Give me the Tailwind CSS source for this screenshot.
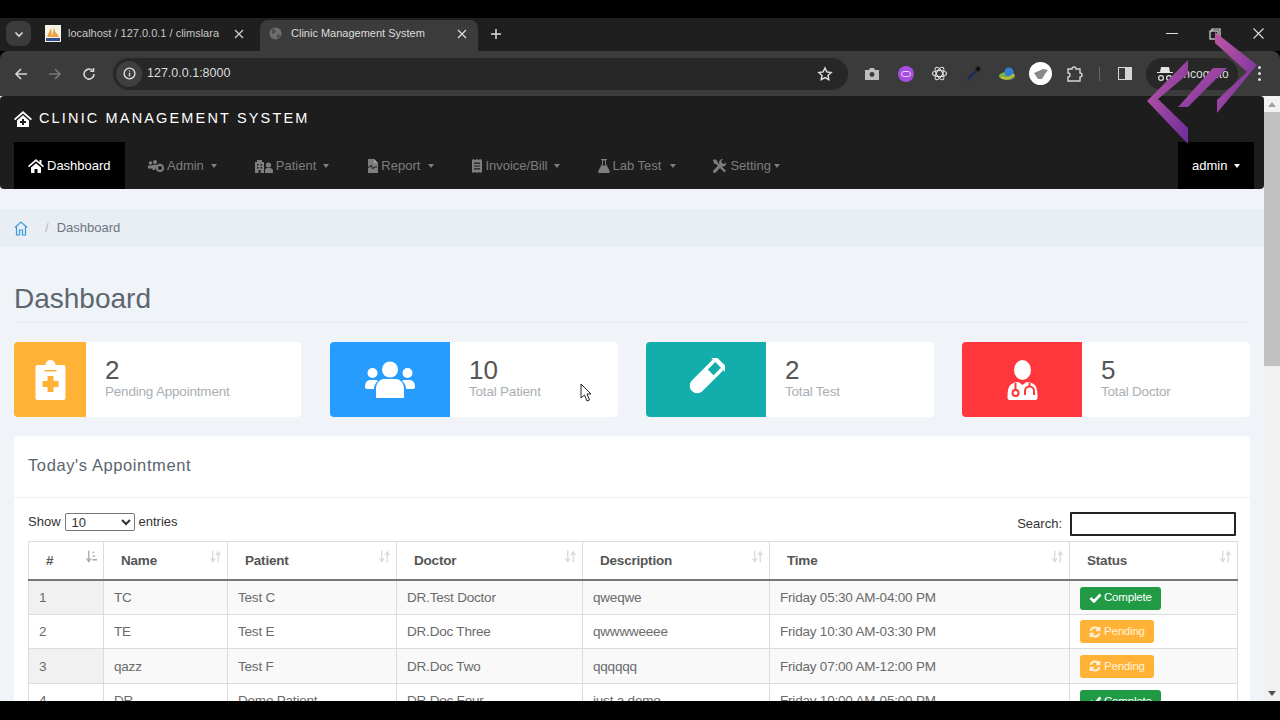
<!DOCTYPE html>
<html lang="en">
<head>
  <meta charset="UTF-8">
  <title>Clinic Management System</title>
  <script src="https://cdn.jsdelivr.net/npm/@tailwindcss/browser@4"></script>
</head>
<body class="bg-black font-['Liberation_Sans',Arial,sans-serif]">
<div class="relative w-[1280px] h-[720px] overflow-hidden bg-black flex flex-col">

  <!-- browser tabs -->
  <div class="mt-[18px] h-[33px] pb-[2px] shrink-0 bg-[#1f1f1f] flex items-center text-[#c7c7c7] text-[11px]">
    <div class="ml-[6px] w-[25px] h-[25px] rounded-lg bg-[#3b3b3b] flex items-center justify-center">
      <svg width="10" height="10" viewBox="0 0 10 10" fill="none" stroke="#ddd" stroke-width="1.6"><path d="M1.5 3.5 5 7l3.5-3.5"/></svg>
    </div>
    <div class="w-[229px] h-full flex items-center pl-[14px]">
      <svg width="16" height="17" viewBox="0 0 16 17" class="mr-[7px] shrink-0"><rect width="16" height="17" fill="#f4f1e6"/><path d="M2 12 6 3l1 9zM7 12l2-10 2 10zM11 12 10 6l4 6z" fill="#e8a33a"/><rect x="1" y="13" width="14" height="3" fill="#2f4f8f"/></svg>
      <span class="w-[153px] overflow-hidden whitespace-nowrap">localhost / 127.0.0.1 / climslara</span>
      <svg width="10" height="10" viewBox="0 0 10 10" stroke="#ccc" stroke-width="1.3" class="ml-[13px]"><path d="M1 1l8 8M9 1 1 9"/></svg>
    </div>
    <div class="w-[218px] h-[31px] self-end -mb-[2px] pb-[4px] bg-[#3b3b3b] rounded-t-lg flex items-center pl-[9px]">
      <svg width="13" height="13" viewBox="0 0 13 13" class="mr-[9px] shrink-0"><circle cx="6.500" cy="6.500" r="6" fill="#6e6e6e"/><path d="M3 2l4 1-1 3-3 1zM8 8l3-1-1 4-2 0z" fill="#4a4a4a"/></svg>
      <span class="w-[166px] whitespace-nowrap text-[#dedede]">Clinic Management System</span>
      <svg width="10" height="10" viewBox="0 0 10 10" stroke="#ddd" stroke-width="1.3"><path d="M1 1l8 8M9 1 1 9"/></svg>
    </div>
    <svg width="12" height="12" viewBox="0 0 12 12" stroke="#ddd" stroke-width="1.5" class="ml-[12px]"><path d="M6 1v10M1 6h10"/></svg>
    <div class="ml-auto flex items-center">
      <div class="w-[12px] h-px bg-[#ddd] mr-[31px]"></div>
      <svg width="12" height="12" viewBox="0 0 12 12" fill="none" stroke="#ddd" stroke-width="1.2" class="mr-[32px]"><rect x="1" y="3" width="8" height="8"/><path d="M3 3V1h8v8H9"/></svg>
      <svg width="11" height="11" viewBox="0 0 11 11" stroke="#ddd" stroke-width="1.1" class="mr-[16px]"><path d="M.5.5l10 10M10.500.5l-10 10"/></svg>
    </div>
  </div>

  <!-- browser toolbar -->
  <div class="h-[45px] shrink-0 bg-[#3b3b3b] rounded-t-lg flex items-center">
    <svg width="14" height="14" viewBox="0 0 14 14" fill="none" stroke="#d6d6d6" stroke-width="1.600" class="ml-[14px]"><path d="M13 7H2M7 2 2 7l5 5"/></svg>
    <svg width="14" height="14" viewBox="0 0 14 14" fill="none" stroke="#777" stroke-width="1.600" class="ml-[20px]"><path d="M1 7h11M7 2l5 5-5 5"/></svg>
    <svg width="14" height="14" viewBox="0 0 14 14" fill="none" stroke="#d6d6d6" stroke-width="1.600" class="ml-[20px]"><path d="M12 7a5 5 0 1 1-1.500-3.500"/><path d="M11.500 1v3.300H8.200" /></svg>
    <div class="ml-[17px] w-[735px] h-[32px] rounded-full bg-[#272727] flex items-center">
      <div class="ml-[3px] w-[26px] h-[26px] rounded-full bg-[#3f3f3f] flex items-center justify-center">
        <svg width="13" height="13" viewBox="0 0 13 13" fill="none" stroke="#e4e4e4" stroke-width="1.300"><circle cx="6.500" cy="6.500" r="5.400"/><path d="M6.500 5.800v3.600M6.500 3.400v1.200"/></svg>
      </div>
      <span class="ml-[5px] text-[12.500px] text-[#dcdcdc]">127.0.0.1:8000</span>
      <svg width="16" height="16" viewBox="0 0 24 24" fill="none" stroke="#dcdcdc" stroke-width="2.200" class="ml-auto mr-[15px]"><path d="m12 3 2.800 5.900 6.400.8-4.700 4.400 1.200 6.400-5.700-3.100-5.700 3.100 1.200-6.400-4.700-4.400 6.400-.8z"/></svg>
    </div>
    <svg width="14" height="12" viewBox="0 0 14 12" class="ml-[17px]"><path d="M0 2h4l1-2h4l1 2h4v10H0z" fill="#bdbdbd"/><circle cx="7" cy="6.500" r="2.400" fill="#3b3b3b"/></svg>
    <div class="ml-[19px] w-[16px] h-[16px] rounded-full bg-[#a54ee0] flex items-center justify-center"><div class="w-[10px] h-[6px] border border-[#e8d0f8] rounded-sm"></div></div>
    <svg width="15" height="15" viewBox="0 0 15 15" fill="none" stroke="#e4e4e4" stroke-width="1.100" class="ml-[18px]"><ellipse cx="7.500" cy="7.500" rx="7" ry="3"/><ellipse cx="7.500" cy="7.500" rx="7" ry="3" transform="rotate(60 7.500 7.500)"/><ellipse cx="7.500" cy="7.500" rx="7" ry="3" transform="rotate(120 7.500 7.500)"/></svg>
    <svg width="15" height="16" viewBox="0 0 15 16" class="ml-[19px]"><path d="M1 15l1-4 7-7 2 2-7 7z" fill="#1c2a5a"/><path d="M9 3l3-3 3 3-3 3z" fill="#111"/></svg>
    <svg width="16" height="14" viewBox="0 0 16 14" class="ml-[18px]"><ellipse cx="8" cy="9" rx="8" ry="4" fill="#7cb342"/><circle cx="10" cy="5" r="4.500" fill="#2f7fd6"/><path d="M2 10q6 4 13-3" stroke="#e8b93a" stroke-width="1.500" fill="none"/></svg>
    <div class="ml-[14px] w-[23px] h-[23px] rounded-full bg-white flex items-center justify-center">
      <svg width="16" height="12" viewBox="0 0 16 12"><path d="M1 5l9-4 5 1-3 4-3 5H5z" fill="#8a8a8a"/></svg>
    </div>
    <svg width="16" height="16" viewBox="0 0 16 16" fill="none" stroke="#d6d6d6" stroke-width="1.400" class="ml-[15px]"><path d="M1 3h4a2 2 0 0 1 4 0h4v4a2 2 0 0 1 0 4v4H1v-4a2 2 0 0 0 0-4z"/></svg>
    <div class="ml-[16px] w-px h-[14px] bg-[#666]"></div>
    <div class="ml-[18px] w-[14px] h-[13px] border border-[#d6d6d6] flex justify-end"><div class="w-[6px] h-full bg-[#d6d6d6]"></div></div>
    <div class="ml-[14px] w-[92px] h-[32px] rounded-full bg-[#272727] flex items-center text-[12px] text-[#dcdcdc] overflow-hidden">
      <svg width="16" height="14" viewBox="0 0 16 14" class="ml-[11px] mr-[7px] shrink-0"><path d="M4 0h8l1 5h3v1H0V5h3z" fill="#e4e4e4"/><circle cx="4" cy="11" r="2.400" fill="none" stroke="#e4e4e4" stroke-width="1.200"/><circle cx="12" cy="11" r="2.400" fill="none" stroke="#e4e4e4" stroke-width="1.200"/></svg>
      <span class="whitespace-nowrap">Incognito</span>
    </div>
    <div class="ml-[20px] flex flex-col gap-[3px]">
      <div class="w-[3px] h-[3px] rounded-full bg-[#ddd]"></div>
      <div class="w-[3px] h-[3px] rounded-full bg-[#ddd]"></div>
      <div class="w-[3px] h-[3px] rounded-full bg-[#ddd]"></div>
    </div>
  </div>

  <!-- page viewport -->
  <div class="h-[605px] shrink-0 flex overflow-hidden">
    <div class="w-[1264px] shrink-0 bg-[#f0f3f8] overflow-hidden">

      <header class="h-[93px] bg-[#1d1d1d] rounded-[4px] flex flex-col">
        <div class="h-[46px] flex items-center pl-[14px] text-white">
          <svg width="18" height="16" viewBox="0 0 18 16" class="mr-[7px]"><path d="M9 0 0 8l1.200 1.300L9 2.500l7.800 6.800L18 8z" fill="#fff"/><path d="M3 9.500 9 4.300l6 5.200V16H3z" fill="#fff"/><path d="M8 8h2v2h2v2h-2v2H8v-2H6v-2h2z" fill="#1d1d1d"/></svg>
          <span class="text-[14.500px] tracking-[2.150px]">CLINIC MANAGEMENT SYSTEM</span>
        </div>
        <nav class="h-[47px] flex px-[14px] text-[13px] text-[#7e7e7e]">
          <a class="w-[111px] bg-black text-white flex items-center pl-[14px] gap-[3px] pt-[1px]">
            <svg width="16" height="14" viewBox="0 0 16 14"><path d="M8 0 0 7l1 1.200L8 2.300l7 5.900L16 7l-2.500-2.100V1h-2v2.200z" fill="#fff"/><path d="M3 8.500 8 4.200l5 4.300V14H9.500v-4h-3v4H3z" fill="#fff"/></svg>
            <span>Dashboard</span>
          </a>
          <a class="ml-[23px] flex items-center gap-[3px] pt-[1px]">
            <svg width="16" height="12" viewBox="0 0 16 12" fill="#7e7e7e"><circle cx="2.500" cy="3" r="1.800"/><circle cx="7" cy="2" r="2"/><path d="M0 5.500h4.500v3H0zM4.500 4.800h5L8 7l-1 3H4.500z"/><circle cx="12" cy="8" r="3" fill="none" stroke="#7e7e7e" stroke-width="2"/><path d="M11.300 3.500h1.400v1.200h-1.400zM11.300 11h1.400v1h-1.400zM7.500 7.300h1v1.400h-1zM15.200 7.300h.8v1.400h-.8z"/></svg>
            <span>Admin</span><span class="ml-[4px] border-x-[3.500px] border-x-transparent border-t-[4px] border-t-[#7e7e7e]"></span>
          </a>
          <a class="ml-[38px] flex items-center gap-[3px] pt-[1px]">
            <svg width="18" height="14" viewBox="0 0 18 14" fill="#7e7e7e"><path d="M0 3h2V1h5v2h2v11H0z"/><path d="M2 5h1.500v1.500H2zM5.500 5H7v1.500H5.500zM2 8h1.500v1.500H2zM5.500 8H7v1.500H5.500zM3.500 11h2v3h-2z" fill="#1d1d1d"/><circle cx="13.500" cy="6" r="2.600"/><path d="M10 14v-2.500c0-1.500 1-2.500 2-2.500h3c1 0 3 1 3 2.500V14z"/></svg>
            <span>Patient</span><span class="ml-[4px] border-x-[3.500px] border-x-transparent border-t-[4px] border-t-[#7e7e7e]"></span>
          </a>
          <a class="ml-[38px] flex items-center gap-[3px] pt-[1px]">
            <svg width="11" height="14" viewBox="0 0 11 14" fill="#7e7e7e"><path d="M1 0h6l4 4v10H1z"/><path d="M7 0v4h4" fill="#a0a0a0"/><path d="M0 8h3l1.200-2 1.500 4L7 8h3" fill="none" stroke="#1d1d1d" stroke-width="1"/></svg>
            <span>Report</span><span class="ml-[5px] border-x-[3.500px] border-x-transparent border-t-[4px] border-t-[#7e7e7e]"></span>
          </a>
          <a class="ml-[38px] flex items-center gap-[3px] pt-[1px]">
            <svg width="10" height="14" viewBox="0 0 10 14" fill="#7e7e7e"><path d="M0 1l1.500-1 1.700 1L5 0l1.800 1 1.700-1L10 1v12l-1.500 1-1.700-1L5 14l-1.800-1-1.700 1L0 13z"/><path d="M2 3.500h6v1.200H2zM2 6.400h6v1.200H2zM2 9.300h6v1.200H2z" fill="#1d1d1d"/></svg>
            <span>Invoice/Bill</span><span class="ml-[3px] border-x-[3.500px] border-x-transparent border-t-[4px] border-t-[#7e7e7e]"></span>
          </a>
          <a class="ml-[38px] flex items-center gap-[3px] pt-[1px]">
            <svg width="12" height="14" viewBox="0 0 12 14" fill="#7e7e7e"><path d="M3 0h6v1H8v4l4 7.500-1 1.500H1l-1-1.500L4 5V1H3z"/><path d="M5 1.500h2V5l.7 1.500H4.300L5 5z" fill="#1d1d1d"/></svg>
            <span>Lab Test</span><span class="ml-[6px] border-x-[3.500px] border-x-transparent border-t-[4px] border-t-[#7e7e7e]"></span>
          </a>
          <a class="ml-[37px] flex items-center gap-[3px] pt-[1px]">
            <svg width="14" height="14" viewBox="0 0 14 14" fill="#7e7e7e"><path d="M0 1.500 1.500 0l3 2v1.500l8.500 8.300-1.500 1.700L3 5H1.500z"/><path d="M9 0a3.500 3.500 0 0 1 1 .2L8.200 2l.7 2.300 2.300.7L13 3.200A3.600 3.600 0 0 1 8.500 7.500L2.700 13.500a1 1 0 0 1-2.200-2.200L6.500 5.300A3.600 3.600 0 0 1 9 0z"/></svg>
            <span>Setting</span><span class="border-x-[3.500px] border-x-transparent border-t-[4px] border-t-[#7e7e7e]"></span>
          </a>
          <a class="ml-auto w-[76px] bg-black text-white flex items-center pl-[14px] mr-[-4px] pt-[1px]">
            <span>admin</span><span class="ml-[7px] border-x-[3.500px] border-x-transparent border-t-[4px] border-t-white"></span>
          </a>
        </nav>
      </header>

      <div class="mt-[20px] h-[38px] bg-[#e9edf4] flex items-center pl-[14px] text-[13px] text-[#6c757d]">
        <svg width="14" height="15" viewBox="0 0 14 15" fill="none" stroke="#3a9bdc" stroke-width="1.200"><path d="M1 6.500 7 1l6 5.500M2.500 5.500V14h3V9h3v5h3V5.500"/></svg>
        <span class="ml-[17px] text-[#b5bac2]">/</span>
        <span class="ml-[8px]">Dashboard</span>
      </div>

      <div class="mx-[14px] mt-[36px] pb-[7px] border-b border-[#e6e9ee]">
        <h1 class="text-[28px] leading-[32px] text-[#5c6670]">Dashboard</h1>
      </div>

      <!-- stat cards -->
      <div class="mt-[19px] ml-[14px] flex gap-[28px]">
        <div class="w-[287px] mr-px h-[75px] bg-white rounded-[4px] flex overflow-hidden">
          <div class="w-[72px] bg-[#ffb236] flex items-center justify-center">
            <svg width="31" height="40" viewBox="0 0 30 40"><path d="M2 5h8a5 5 0 0 1 10 0h8a2 2 0 0 1 2 2v31a2 2 0 0 1-2 2H2a2 2 0 0 1-2-2V7a2 2 0 0 1 2-2z" fill="#fff"/><path d="M9 10h12v1.500H9z" fill="#ffb236"/><path d="M12 16h6v5h5v6h-5v5h-6v-5H7v-6h5z" fill="#ffb236"/></svg>
          </div>
          <div class="pl-[19px] pt-[14px]">
            <div class="text-[26px] leading-[28px] text-[#555]">2</div>
            <div class="text-[13.500px] leading-[16px] tracking-[-0.2px] text-[#a9afb5]">Pending Appointment</div>
          </div>
        </div>
        <div class="w-[288px] h-[75px] bg-white rounded-[4px] flex overflow-hidden">
          <div class="w-[120px] bg-[#279cff] flex items-center justify-center">
            <svg width="50" height="37" viewBox="0 0 50 37" fill="#fff"><circle cx="25" cy="8.500" r="8"/><path d="M11 37V28c0-7 5-10 8-10h12c3 0 8 3 8 10v9z" rx="4"/><circle cx="7.500" cy="12" r="5"/><circle cx="42.500" cy="12" r="5"/><path d="M0 27c0-6 2-8 6-8h5l2 1c-3 2-4 5-4 8H2z"/><path d="M50 27c0-6-2-8-6-8h-5l-2 1c3 2 4 5 4 8h7z"/></svg>
          </div>
          <div class="pl-[19px] pt-[14px]">
            <div class="text-[26px] leading-[28px] text-[#555]">10</div>
            <div class="text-[13.500px] leading-[16px] tracking-[-0.2px] text-[#a9afb5]">Total Patient</div>
          </div>
        </div>
        <div class="w-[288px] h-[75px] bg-white rounded-[4px] flex overflow-hidden">
          <div class="w-[120px] bg-[#13aeab] flex items-center justify-center">
            <svg width="40" height="40" viewBox="0 0 40 40" class="-mt-[3px] -ml-[3px]"><g transform="rotate(45 20 20)"><rect x="10" y="-3" width="20" height="4.500" rx="1" fill="#fff"/><path d="M12.500 1.500h15V31a7.500 7.500 0 0 1-15 0z" fill="#fff"/><path d="M16 1.500h8V12h-8z" fill="#13aeab"/></g></svg>
          </div>
          <div class="pl-[19px] pt-[14px]">
            <div class="text-[26px] leading-[28px] text-[#555]">2</div>
            <div class="text-[13.500px] leading-[16px] tracking-[-0.2px] text-[#a9afb5]">Total Test</div>
          </div>
        </div>
        <div class="w-[288px] h-[75px] bg-white rounded-[4px] flex overflow-hidden">
          <div class="w-[120px] bg-[#ff363b] flex items-center justify-center">
            <svg width="33" height="40" viewBox="0 0 30 40"><ellipse cx="15" cy="10" rx="8.500" ry="10" fill="#fff"/><path d="M2 26c2-3 6-4 9-4l4 3 4-3c3 0 7 1 9 4 2 3 2 8 2 12 0 1-1 2-2 2H2c-1 0-2-1-2-2 0-4 0-9 2-12z" fill="#fff"/><circle cx="8" cy="33" r="3" fill="none" stroke="#ff363b" stroke-width="2"/><path d="M8 30v-7M22 23v3M17.500 35v-4a4.500 4.500 0 0 1 9 0v4" fill="none" stroke="#ff363b" stroke-width="2"/></svg>
          </div>
          <div class="pl-[19px] pt-[14px]">
            <div class="text-[26px] leading-[28px] text-[#555]">5</div>
            <div class="text-[13.500px] leading-[16px] tracking-[-0.2px] text-[#a9afb5]">Total Doctor</div>
          </div>
        </div>
      </div>

      <!-- appointment table -->
      <section class="mt-[19px] mx-[14px] bg-white rounded-t-[4px]">
        <div class="h-[62px] pl-[14px] pb-[2px] flex items-center border-b border-[#eceff3] text-[16.500px] tracking-[0.6px] text-[#5a6570]">Today's Appointment</div>
        <div class="px-[14px]">
          <div class="h-[43px] flex items-start justify-between text-[13px] text-[#333]">
            <label class="mt-[14px] flex items-center gap-[4px]">Show
              <select class="w-[70px] h-[18px] border border-[#777] rounded-[2px] bg-white text-[13px] leading-none pl-[2px]"><option>10</option></select>
              entries
            </label>
            <label class="mt-[14px] flex items-center gap-[8px]">Search:
              <input class="w-[166px] h-[24px] border-2 border-[#222] rounded-[1px] bg-white">
            </label>
          </div>
          <table class="w-[1209px] table-fixed border-collapse text-[13.500px] tracking-[-0.2px] text-[#6a6a6a]">
            <colgroup>
              <col class="w-[75px]"><col class="w-[124px]"><col class="w-[169px]"><col class="w-[186px]"><col class="w-[187px]"><col class="w-[300px]"><col class="w-[168px]">
            </colgroup>
            <thead class="text-[#555] font-bold text-left">
              <tr id="head" class="h-[38px]"></tr>
            </thead>
            <tbody id="rows"></tbody>
          </table>
        </div>
      </section>
    </div>

    <!-- scrollbar -->
    <div class="w-[16px] bg-[#f1f1f1] flex flex-col items-center">
      <div class="h-[16px] flex items-center"><div class="border-x-[4px] border-x-transparent border-b-[5px] border-b-[#a3a3a3]"></div></div>
      <div class="w-full h-[254px] bg-[#c1c1c1]"></div>
      <div class="mt-auto h-[16px] flex items-center"><div class="border-x-[4px] border-x-transparent border-t-[5px] border-t-[#505050]"></div></div>
    </div>
  </div>

  <!-- mouse pointer -->
  <svg width="13" height="19" viewBox="0 0 13 19" class="absolute left-[580px] top-[383px]"><path d="M1 1v14l3.500-3 2.500 6 2.500-1-2.500-6H11z" fill="#fff" stroke="#222" stroke-width="1"/></svg>

  <!-- watermark logo -->
  <svg width="118" height="116" viewBox="0 0 118 116" class="absolute left-[1145px] top-[29px]">
    <defs><linearGradient id="wm" x1="0" y1="0" x2="1" y2="1"><stop offset="0" stop-color="#c058a5"/><stop offset="1" stop-color="#6c2d9c"/></linearGradient></defs>
    <path d="M2 72 43 31v14L13 70l30 29v16z" fill="url(#wm)"/>
    <path d="M33 78h10l39-39H68z" fill="url(#wm)"/>
    <path d="M70 3l42 33-40 48V71l30-28-32-29z" fill="url(#wm)"/>
  </svg>
</div>

<script>
  const columns = ['#', 'Name', 'Patient', 'Doctor', 'Description', 'Time', 'Status'];
  const appointments = [
    ['1', 'TC', 'Test C', 'DR.Test Doctor', 'qweqwe', 'Friday 05:30 AM-04:00 PM', 'Complete'],
    ['2', 'TE', 'Test E', 'DR.Doc Three', 'qwwwweeee', 'Friday 10:30 AM-03:30 PM', 'Pending'],
    ['3', 'qazz', 'Test F', 'DR.Doc Two', 'qqqqqq', 'Friday 07:00 AM-12:00 PM', 'Pending'],
    ['4', 'DR', 'Demo Patient', 'DR.Doc Four', 'just a demo', 'Friday 10:00 AM-05:00 PM', 'Complete']
  ];

  function sortIcon(active) {
    const color = active ? '#a8a8a8' : '#dadada';
    return `<svg width="11" height="14" viewBox="0 0 12 14" fill="none" stroke="${color}" stroke-width="1.400" class="absolute right-[6px] top-[8px]"><path d="M3 0v11M.5 8.500 3 12l2.500-3.500"/>${active ? '<path d="M7 2h2M7 6h3M7 10h5"/>' : '<path d="M9 13V2M6.500 5 9 1.500 11.500 5"/>'}</svg>`;
  }

  function statusBadge(status) {
    if (status === 'Complete') {
      return `<span class="inline-flex items-center gap-[2px] h-[23px] px-[9px] rounded-[3px] bg-[#219a46] text-white text-[11.500px]"><svg width="13" height="10" viewBox="0 0 12 10" fill="none" stroke="#fff" stroke-width="2.600"><path d="M1 5l3.500 3.500L11 1.500"/></svg>Complete</span>`;
    }
    return `<span class="inline-flex items-center gap-[3px] h-[23px] px-[9px] rounded-[3px] bg-[#ffb236] text-[#fff3dc] text-[11.500px]"><svg width="12" height="12" viewBox="0 0 11 11" fill="none" stroke="#fff3dc" stroke-width="1.800"><path d="M1.500 4.500A4 4 0 0 1 9 3.500M9.500 6.500A4 4 0 0 1 2 7.500"/><path d="M9.500 1v3H6.500M1.500 10V7h3"/></svg>Pending</span>`;
  }

  document.getElementById('head').innerHTML = columns.map((name, c) =>
    `<th class="border border-[#dcdcdc] border-b-2 border-b-[#777] pl-[17px] pt-[2px] relative">${name}${sortIcon(c === 0)}</th>`).join('');

  document.getElementById('rows').innerHTML = appointments.map((row, i) => `
    <tr class="h-[34.500px] ${i % 2 === 0 ? 'bg-[#f9f9f9]' : 'bg-white'}">
      ${row.slice(0, 6).map((cell, c) => `<td class="border border-[#dcdcdc] pl-[10px] pt-[2px] ${c === 0 && i % 2 === 0 ? 'bg-[#f1f1f1]' : ''}">${cell}</td>`).join('')}
      <td class="border border-[#dcdcdc] pl-[10px] pt-[2px]">${statusBadge(row[6])}</td>
    </tr>`).join('');
</script>
</body>
</html>
